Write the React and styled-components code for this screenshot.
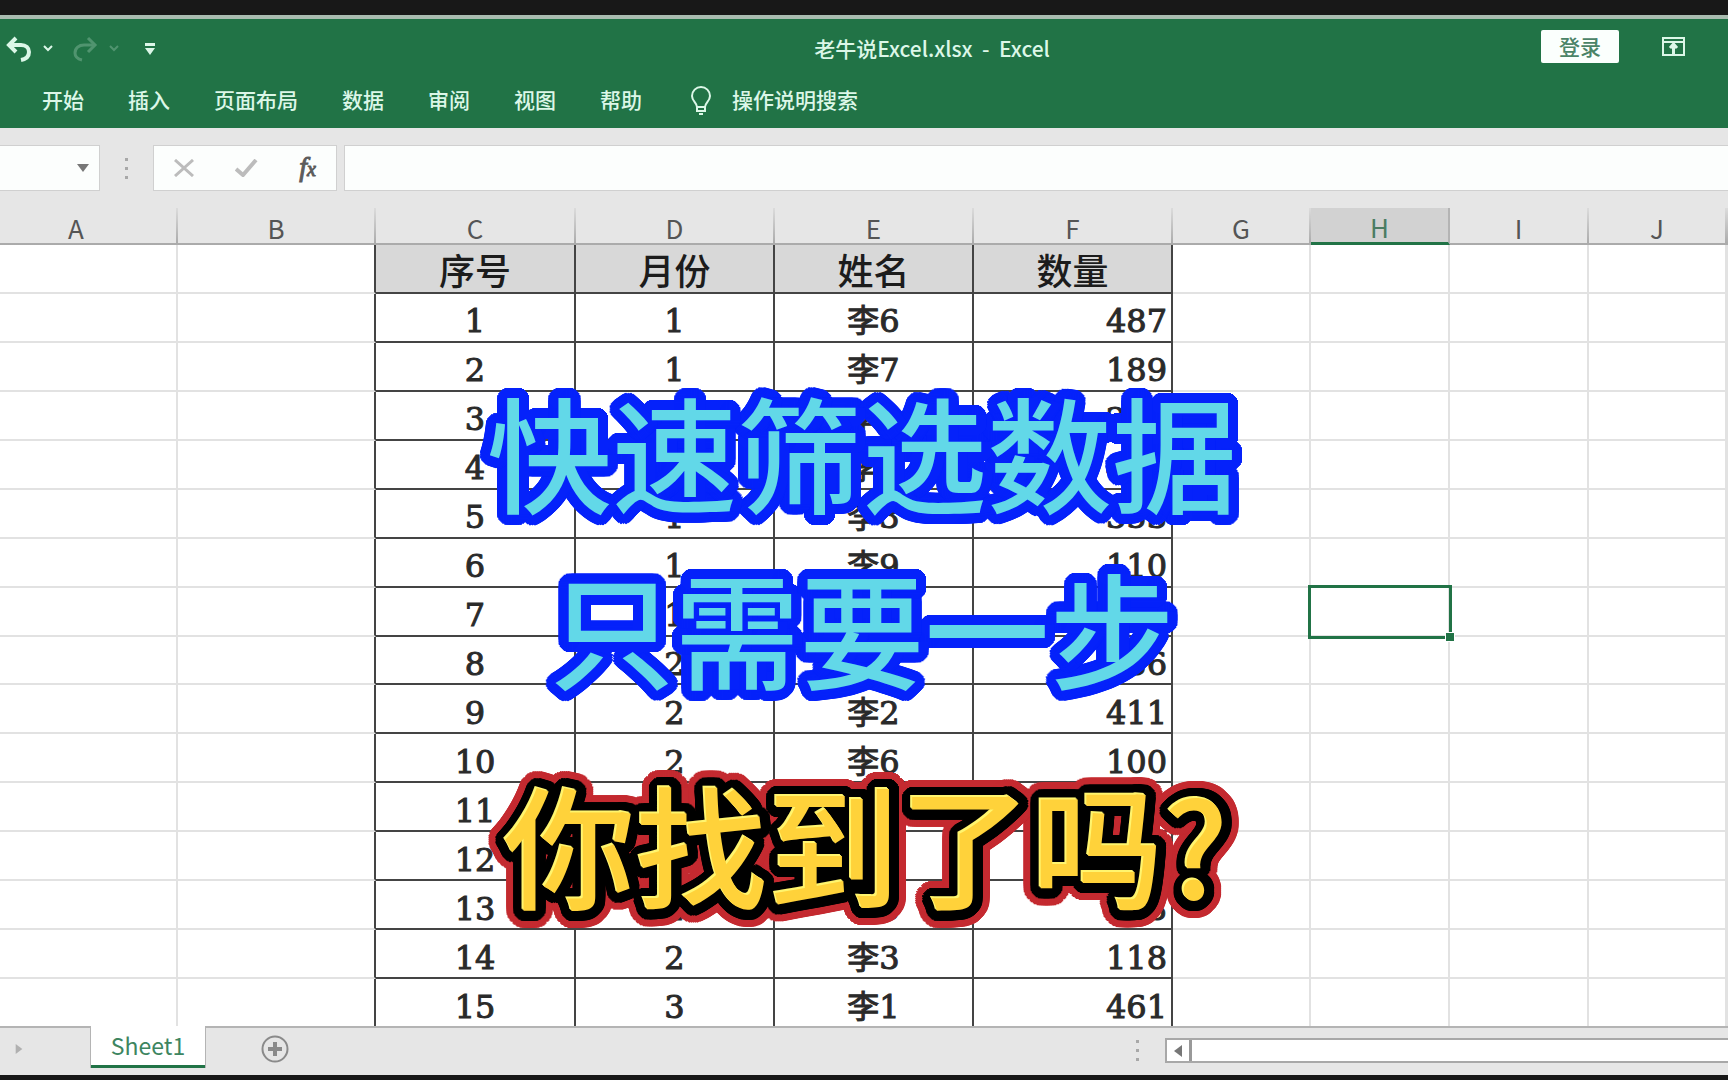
import React from 'react';
import styled, {createGlobalStyle, css} from 'styled-components';

const GREEN = '#217346';
const GRID_LINE = '#e2e2e2';
const TABLE_LINE = '#444444';
const UI_FONT = '"Noto Sans CJK SC", "Noto Sans", sans-serif';

const COLUMNS = [
  {name: 'A', width: 178},
  {name: 'B', width: 198},
  {name: 'C', width: 200},
  {name: 'D', width: 199},
  {name: 'E', width: 199},
  {name: 'F', width: 199},
  {name: 'G', width: 138},
  {name: 'H', width: 139},
  {name: 'I', width: 139},
  {name: 'J', width: 138},
  {name: '', width: 1}
];

const FIELDS = ['序号', '月份', '姓名', '数量'];

const RECORDS = [
  [1, 1, '李6', 487],
  [2, 1, '李7', 189],
  [3, 1, '李1', 268],
  [4, 1, '李2', 406],
  [5, 1, '李3', 353],
  [6, 1, '李9', 110],
  [7, 1, '李4', 275],
  [8, 2, '李8', 336],
  [9, 2, '李2', 411],
  [10, 2, '李6', 100],
  [11, 2, '李7', 322],
  [12, 2, '李5', 246],
  [13, 2, '李3', 193],
  [14, 2, '李3', 118],
  [15, 3, '李1', 461]
];

const MENUS = ['开始', '插入', '页面布局', '数据', '审阅', '视图', '帮助'];

const SELECTED = {column: 'H', record: 7};

// ring of hard shadows, gives the letters an outline with round corners
const outline = (radius, color, steps = 40) =>
  Array.from({length: steps}, (_, i) => {
    const angle = (i / steps) * Math.PI * 2;
    const x = Math.round(Math.cos(angle) * radius);
    const y = Math.round(Math.sin(angle) * radius);
    return `${x}px ${y}px 0 ${color}`;
  }).join(', ');

const GlobalStyle = createGlobalStyle`
  * {
    box-sizing: border-box;
  }

  body {
    margin: 0;
    background: #181818;
    font-family: ${UI_FONT};
  }

  button,
  input {
    margin: 0;
    padding: 0;
    border: 0;
    border-radius: 0;
    background: none;
    font: inherit;
    color: inherit;
  }
`;

const Screen = styled.div`
  position: relative;
  display: flex;
  flex-direction: column;
  height: 100vh;
  overflow: hidden;
  padding: 15px 0 5px;
  background: #181818;
`;

const Ribbon = styled.header`
  border-top: 4px solid #a9bcb0;
  background: ${GREEN};
  color: #dcf7e8;
`;

const TitleBar = styled.div`
  display: grid;
  grid-template-columns: 1fr auto 1fr;
  align-items: center;
  height: 60px;
`;

const QuickAccess = styled.div`
  display: flex;
  align-items: center;
  padding-left: 5px;
`;

const QuickButton = styled.button`
  display: flex;
  margin-right: ${props => props.gap || 0}px;
  opacity: ${props => (props.disabled ? 0.25 : 1)};
`;

const FileName = styled.div`
  padding: 0 0 2px 136px;
  font-size: 21px;
  font-weight: 500;
  line-height: 28px;
  white-space: pre;
`;

const WindowTools = styled.div`
  display: flex;
  justify-content: flex-end;
  align-items: center;
  gap: 43px;
  padding: 0 43px 6px 0;
`;

const LoginButton = styled.button`
  width: 78px;
  height: 33px;
  border-radius: 2px;
  background: #fbfffd;
  color: #4b8468;
  font-size: 21px;
  font-weight: 500;
  line-height: 30px;
`;

const MenuBar = styled.nav`
  display: flex;
  align-items: center;
  gap: 44px;
  height: 49px;
  padding: 0 0 10px 42px;
  font-size: 21px;
  font-weight: 500;
  line-height: 30px;
`;

const SearchButton = styled.button`
  display: flex;
  align-items: center;
  gap: 20px;
  padding-left: 4px;

  svg {
    margin-top: 4px;
  }
`;

const FormulaBar = styled.div`
  display: flex;
  padding: 17px 0;
  background: #e6e6e6;
`;

const NameBox = styled.div`
  display: flex;
  width: 100px;
  height: 46px;
  border: 1px solid #d0d0d0;
  border-left: 0;
  background: #fcfefd;

  input {
    flex: 1;
    min-width: 0;
  }

  button {
    display: flex;
    align-items: center;
    padding: 0 10px;
    color: #777777;
  }
`;

const Handle = styled.span`
  display: flex;
  flex-direction: column;
  justify-content: center;
  gap: 6px;
  margin: 0 ${props => props.right}px 0 ${props => props.left}px;

  i {
    width: 3px;
    height: 3px;
    background: #a8a8a8;
  }
`;

const FormulaTools = styled.div`
  display: flex;
  align-items: center;
  justify-content: space-between;
  width: 184px;
  margin-right: 7px;
  padding: 0 20px;
  border: 1px solid #d0d0d0;
  background: #fcfefd;

  button {
    display: flex;
  }
`;

const FormulaInput = styled.input`
  && {
    flex: 1;
    min-width: 0;
    border: 1px solid #d0d0d0;
    border-right: 0;
    background: #fcfefd;
  }
`;

const FxLabel = styled.span`
  color: #5c5c5c;
  font: italic 28px/26px "Liberation Serif", serif;
  -webkit-text-stroke: 1px #5c5c5c;

  small {
    font-size: 20px;
  }
`;

const SheetArea = styled.main`
  flex: 1;
  min-height: 0;
  background: #ffffff;
`;

const Sheet = styled.table`
  width: 100%;
  height: 100%;
  table-layout: fixed;
  border-collapse: separate;
  border-spacing: 0;
`;

const ColumnHead = styled.th`
  height: 37px;
  padding: 4px ${props => (props.cropped ? 24 : 0)}px 0 0;
  border-right: 2px solid transparent;
  border-bottom: 2px solid #b4b4b4;
  border-image: linear-gradient(#dddddd, #aaaaaa) 1;
  background: #e6e6e6;
  color: #555555;
  font-size: 26px;
  font-weight: 400;
  line-height: 28px;

  ${props =>
    props.selected &&
    css`
      border-image: none;
      border-right-color: #b4b4b4;
      border-bottom: 3px solid ${GREEN};
      background: #d2d2d2;
      color: #4b7d63;
    `}
`;

const Cell = styled.td`
  position: relative;
  height: 48px;
  padding: 0;
  border-right: 2px solid ${GRID_LINE};
  border-bottom: 2px solid ${GRID_LINE};
`;

// cells of column B touch the table, so their right edge is drawn dark
const EdgeCell = styled(Cell)`
  border-right-color: ${TABLE_LINE};
`;

const FieldCell = styled(Cell)`
  padding-top: 2px;
  border-color: ${TABLE_LINE};
  background: #d8d8d8;
  color: #1c1c1c;
  font-size: 36px;
  font-weight: 500;
  line-height: 36px;
  text-align: center;
`;

const ValueCell = styled(Cell)`
  padding: 8px ${props => (props.numeric ? 4 : 0)}px 0 0;
  border-color: ${TABLE_LINE};
  color: #2a2a2a;
  font-family: "DejaVu Serif", "Noto Sans CJK SC", serif;
  font-size: 32px;
  line-height: 36px;
  text-align: ${props => (props.numeric ? 'right' : 'center')};
  -webkit-text-stroke: 1px #2a2a2a;
`;

const Selection = styled.div`
  position: absolute;
  z-index: 1;
  inset: -3px -4px -4px -3px;
  border: 3px solid ${GREEN};

  &::after {
    content: '';
    position: absolute;
    right: -5px;
    bottom: -5px;
    width: 8px;
    height: 8px;
    background: ${GREEN};
    box-shadow: 0 0 0 1px #ffffff;
  }
`;

const StatusBar = styled.footer`
  position: relative;
  display: flex;
  align-items: flex-start;
  height: 49px;
  margin-top: -2px;
  background: #e6e6e6;
  box-shadow: inset 0 2px 0 #b4b4b4;
`;

const SheetNav = styled.button`
  display: flex;
  margin: 18px 66px 0 14px;
  color: #b0b0b0;
`;

const SheetTab = styled.button`
  && {
    width: 116px;
    height: 42px;
    padding-bottom: 4px;
    border: solid #b4b4b4;
    border-width: 0 1px;
    background: #ffffff;
    box-shadow: inset 0 -3px 0 ${GREEN};
    color: #3d8560;
    font-size: 23px;
    line-height: 34px;
  }
`;

const AddSheet = styled.button`
  display: flex;
  margin: 9px 0 0 55px;
`;

const ScrollArea = styled.div`
  display: flex;
  align-items: center;
  width: 592px;
  height: 49px;
  margin-left: auto;
`;

const ScrollTrack = styled.div`
  display: flex;
  flex: 1;
  height: 25px;
  border: 2px solid #a8a8a8;
  border-right: 0;
  background: #ffffff;

  button {
    display: flex;
    align-items: center;
    padding: 0 5px;
    border-right: 3px solid #999999;
    color: #777777;
  }
`;

const Captions = styled.div`
  position: absolute;
  z-index: 2;
  inset: 0;
  display: flex;
  flex-direction: column;
  align-items: center;
  padding: 362px 4px 0 0;
  pointer-events: none;
  white-space: nowrap;
`;

const BlueCaption = styled.p`
  margin: 0;
  color: #62d8e8;
  font-size: 125px;
  font-weight: 500;
  line-height: 176px;
  text-shadow: ${outline(10, '#0522fa')}, ${outline(5, '#0522fa', 16)};
`;

const GoldCaption = styled.p`
  margin: 40px 0 0;
  padding-left: 8px;
  color: #ffd23a;
  font-size: 132px;
  font-weight: 500;
  line-height: 176px;
  text-shadow: -1px -1px 0 #fff56e, -2px -2px 0 #fff56e, ${outline(10, '#000000')},
    ${outline(5, '#000000', 16)}, ${outline(17, '#c42a30', 60)}, ${outline(12, '#c42a30')};
`;

const Undo = () => (
  <svg width="28" height="26" viewBox="0 0 28 26" fill="none" stroke="currentColor" strokeWidth="4">
    <path d="M4 9h12c5 0 8 3 8 7s-3 7-8 8" />
    <path d="M11 2 4 9l7 7" />
  </svg>
);

const Redo = () => (
  <svg width="26" height="26" viewBox="0 0 26 26" fill="none" stroke="currentColor" strokeWidth="3">
    <path d="M23 9H12c-5 0-9 3-9 8 0 4 3 6 7 7" />
    <path d="m16 2 7 7-7 7" />
  </svg>
);

const Chevron = () => (
  <svg width="12" height="8" viewBox="0 0 12 8" fill="none" stroke="currentColor" strokeWidth="2">
    <path d="m2 1 4 4 4-4" />
  </svg>
);

const Customize = () => (
  <svg width="10" height="12" viewBox="0 0 10 12" fill="currentColor">
    <path d="M0 0h10v3H0zM0 5h10L5 12z" />
  </svg>
);

const RibbonOptions = () => (
  <svg width="23" height="19" viewBox="0 0 23 19" fill="none" stroke="currentColor" strokeWidth="2">
    <path d="M1 1h21v17H1zM1 5h21" />
    <path d="M11.500 17V8M8 11l3.500-4 3.500 4" strokeWidth="3" />
  </svg>
);

const Bulb = () => (
  <svg width="22" height="30" viewBox="0 0 22 30" fill="none" stroke="currentColor" strokeWidth="2">
    <path d="M7 21c0-4-5-6-5-11a9 9 0 0 1 18 0c0 5-5 7-5 11zM7 21v4h8v-4M9 28h4" />
  </svg>
);

const Triangle = ({direction, size}) => (
  <svg width={size} height={size} viewBox="0 0 12 12" fill="currentColor">
    {direction === 'down' && <path d="M0 2h12l-6 8z" />}
    {direction === 'left' && <path d="M10 0v12L2 6z" />}
    {direction === 'right' && <path d="M2 0v12l8-6z" />}
  </svg>
);

const Cancel = () => (
  <svg width="20" height="18" viewBox="0 0 20 18" fill="none" stroke="#bcbcbc" strokeWidth="3">
    <path d="m1 1 18 16M19 1 1 17" />
  </svg>
);

const Enter = () => (
  <svg width="23" height="18" viewBox="0 0 23 18" fill="none" stroke="#bcbcbc" strokeWidth="4">
    <path d="m1 10 7 6L21 1" />
  </svg>
);

const Plus = () => (
  <svg width="28" height="28" viewBox="0 0 28 28" fill="none" stroke="#8a8a8a">
    <circle cx="14" cy="14" r="12.500" strokeWidth="2" />
    <path d="M14 7v14M7 14h14" strokeWidth="4" />
  </svg>
);

const Dots = props => (
  <Handle {...props}>
    <i />
    <i />
    <i />
  </Handle>
);

const SheetRow = ({record, children}) => (
  <tr>
    <Cell />
    <EdgeCell />
    {children}
    {COLUMNS.slice(6).map(({name}) => (
      <Cell key={name}>
        {name === SELECTED.column && record === SELECTED.record ? <Selection /> : null}
      </Cell>
    ))}
  </tr>
);

const SheetTable = () => (
  <Sheet>
    <colgroup>
      {COLUMNS.map(({name, width}) => (
        <col key={name} width={width} />
      ))}
    </colgroup>
    <thead>
      <tr>
        {COLUMNS.map(({name}) => (
          <ColumnHead key={name} cropped={name === 'A'} selected={name === SELECTED.column}>
            {name}
          </ColumnHead>
        ))}
      </tr>
    </thead>
    <tbody>
      <SheetRow>
        {FIELDS.map(field => (
          <FieldCell key={field}>{field}</FieldCell>
        ))}
      </SheetRow>
      {RECORDS.map(([id, month, name, amount]) => (
        <SheetRow key={id} record={id}>
          <ValueCell>{id}</ValueCell>
          <ValueCell>{month}</ValueCell>
          <ValueCell>{name}</ValueCell>
          <ValueCell numeric>{amount}</ValueCell>
        </SheetRow>
      ))}
    </tbody>
  </Sheet>
);

const App = () => (
  <>
    <GlobalStyle />
    <Screen>
      <Ribbon>
        <TitleBar>
          <QuickAccess>
            <QuickButton aria-label="撤消" gap={9}><Undo /></QuickButton>
            <QuickButton aria-label="撤消列表" gap={18}><Chevron /></QuickButton>
            <QuickButton aria-label="恢复" gap={10} disabled><Redo /></QuickButton>
            <QuickButton aria-label="恢复列表" gap={25} disabled><Chevron /></QuickButton>
            <QuickButton aria-label="自定义"><Customize /></QuickButton>
          </QuickAccess>
          <FileName>老牛说Excel.xlsx  -  Excel</FileName>
          <WindowTools>
            <LoginButton>登录</LoginButton>
            <QuickButton aria-label="功能区显示选项"><RibbonOptions /></QuickButton>
          </WindowTools>
        </TitleBar>
        <MenuBar>
          {MENUS.map(menu => (
            <button key={menu}>{menu}</button>
          ))}
          <SearchButton>
            <Bulb />
            操作说明搜索
          </SearchButton>
        </MenuBar>
      </Ribbon>
      <FormulaBar>
        <NameBox>
          <input aria-label="名称框" />
          <button aria-label="名称列表"><Triangle direction="down" size={12} /></button>
        </NameBox>
        <Dots left={25} right={25} />
        <FormulaTools>
          <button aria-label="取消"><Cancel /></button>
          <button aria-label="输入"><Enter /></button>
          <button aria-label="插入函数"><FxLabel>f<small>x</small></FxLabel></button>
        </FormulaTools>
        <FormulaInput aria-label="编辑栏" />
      </FormulaBar>
      <SheetArea>
        <SheetTable />
      </SheetArea>
      <StatusBar>
        <SheetNav aria-label="下一个工作表" disabled><Triangle direction="right" size={10} /></SheetNav>
        <SheetTab>Sheet1</SheetTab>
        <AddSheet aria-label="新工作表"><Plus /></AddSheet>
        <ScrollArea>
          <Dots left={0} right={26} />
          <ScrollTrack>
            <button aria-label="向左滚动"><Triangle direction="left" size={12} /></button>
          </ScrollTrack>
        </ScrollArea>
      </StatusBar>
      <Captions>
        <BlueCaption>快速筛选数据</BlueCaption>
        <BlueCaption>只需要一步</BlueCaption>
        <GoldCaption>你找到了吗?</GoldCaption>
      </Captions>
    </Screen>
  </>
);

export default App;
